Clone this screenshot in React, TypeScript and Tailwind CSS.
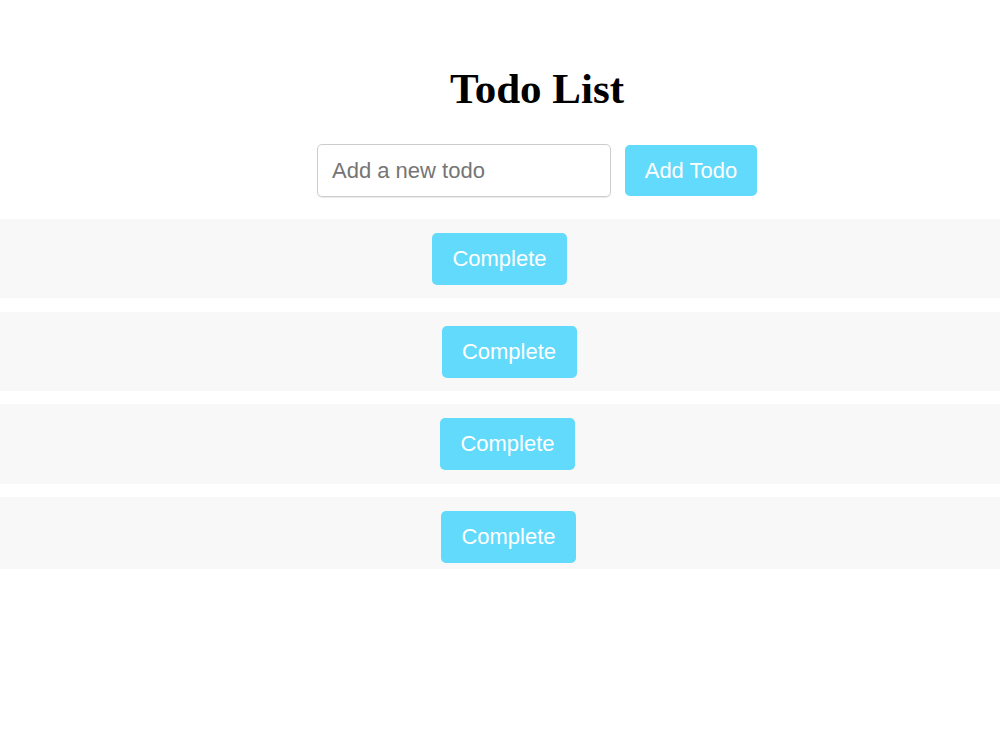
import React from "react";

const rows = [
  { h: "h-[79px]", ml: "ml-[-1px]", mb: "mb-[14px]" },
  { h: "h-[79px]", ml: "ml-[18px]", mb: "mb-[13px]" },
  { h: "h-[80px]", ml: "ml-[15px]", mb: "mb-[13px]" },
  { h: "h-[72px]", ml: "ml-[17px]", mb: "mb-0" },
];

export default function App() {
  return (
    <div className="min-h-[750px] w-[1000px] bg-white font-['Liberation_Sans',Arial,sans-serif]">
      <h1 className="pt-[65px] h-[113px] leading-[48px] text-center pl-[74px] font-['Liberation_Serif','Times_New_Roman',serif] font-bold text-[43px] text-black">
        Todo List
      </h1>
      <div className="mt-[31px] flex justify-center items-center pl-[74px] gap-[14px]">
        <input
          type="text"
          placeholder="Add a new todo"
          className="w-[294px] h-[53px] rounded-[5px] border border-[#cccccc] px-[14px] text-[22px] text-[#333] placeholder:text-[#757575] outline-none shadow-[0_1px_1px_rgba(0,0,0,0.08)]"
        />
        <button className="w-[132px] h-[51px] rounded-[5px] bg-[#61dafb] text-white text-[22px]">
          Add Todo
        </button>
      </div>
      <div className="mt-[22px]">
        {rows.map((r, i) => (
          <div key={i} className={`${r.h} ${r.mb} bg-[#f8f8f8] flex justify-center items-start pt-[14px]`}>
            <button className={`${r.ml} w-[135px] h-[52px] rounded-[5px] bg-[#61dafb] text-white text-[22px] pb-[1px]`}>
              Complete
            </button>
          </div>
        ))}
      </div>
    </div>
  );
}
